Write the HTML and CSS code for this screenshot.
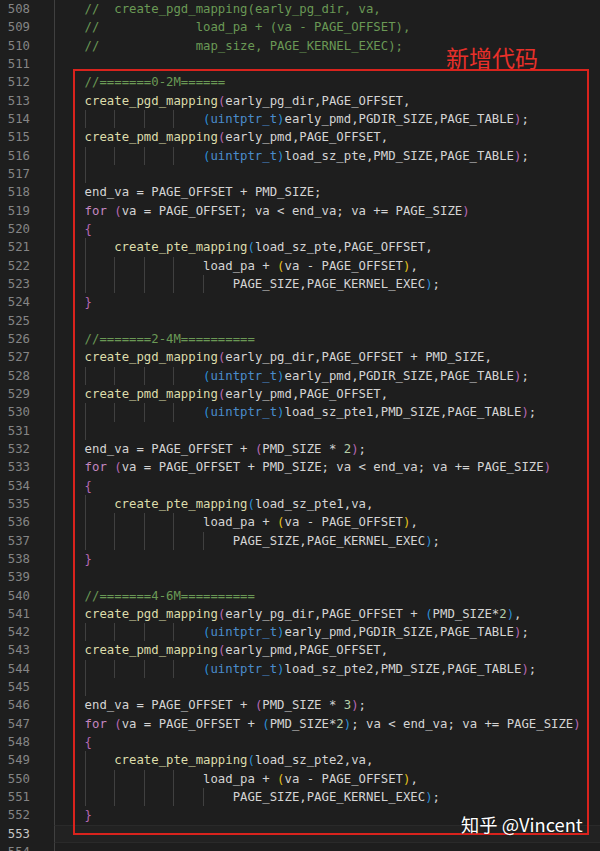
FILE: index.html
```html
<!DOCTYPE html>
<html lang="zh">
<head>
<meta charset="utf-8">
<link rel="stylesheet" href="styles.css">
<title>editor</title>
</head>
<body>
<div class="editor">
  <div class="ln"><span class="num">508</span><span class="code"><i class="sp"></i><span class="c">//  create_pgd_mapping(early_pg_dir, va,</span></span></div>
  <div class="ln"><span class="num">509</span><span class="code"><i class="sp"></i><span class="c">//             load_pa + (va - PAGE_OFFSET),</span></span></div>
  <div class="ln"><span class="num">510</span><span class="code"><i class="sp"></i><span class="c">//             map_size, PAGE_KERNEL_EXEC);</span></span></div>
  <div class="ln"><span class="num">511</span><span class="code"></span></div>
  <div class="ln"><span class="num">512</span><span class="code"><i class="sp"></i><span class="c">//=======0-2M======</span></span></div>
  <div class="ln"><span class="num">513</span><span class="code"><i class="sp"></i><span class="f">create_pgd_mapping</span><span class="b2">(</span>early_pg_dir,PAGE_OFFSET,</span></div>
  <div class="ln"><span class="num">514</span><span class="code"><i class="sp"></i><i class="g"></i><i class="g"></i><i class="g"></i><i class="g"></i><span class="b3">(</span><span class="t">uintptr_t</span><span class="b3">)</span>early_pmd,PGDIR_SIZE,PAGE_TABLE<span class="b2">)</span>;</span></div>
  <div class="ln"><span class="num">515</span><span class="code"><i class="sp"></i><span class="f">create_pmd_mapping</span><span class="b2">(</span>early_pmd,PAGE_OFFSET,</span></div>
  <div class="ln"><span class="num">516</span><span class="code"><i class="sp"></i><i class="g"></i><i class="g"></i><i class="g"></i><i class="g"></i><span class="b3">(</span><span class="t">uintptr_t</span><span class="b3">)</span>load_sz_pte,PMD_SIZE,PAGE_TABLE<span class="b2">)</span>;</span></div>
  <div class="ln"><span class="num">517</span><span class="code"><i class="sp"></i><i class="g"></i></span></div>
  <div class="ln"><span class="num">518</span><span class="code"><i class="sp"></i>end_va = PAGE_OFFSET + PMD_SIZE;</span></div>
  <div class="ln"><span class="num">519</span><span class="code"><i class="sp"></i><span class="k">for</span> <span class="b2">(</span>va = PAGE_OFFSET; va &lt; end_va; va += PAGE_SIZE<span class="b2">)</span></span></div>
  <div class="ln"><span class="num">520</span><span class="code"><i class="sp"></i><span class="b2">{</span></span></div>
  <div class="ln"><span class="num">521</span><span class="code"><i class="sp"></i><i class="g"></i><span class="f">create_pte_mapping</span><span class="b3">(</span>load_sz_pte,PAGE_OFFSET,</span></div>
  <div class="ln"><span class="num">522</span><span class="code"><i class="sp"></i><i class="g"></i><i class="g"></i><i class="g"></i><i class="g"></i>load_pa + <span class="b1">(</span>va - PAGE_OFFSET<span class="b1">)</span>,</span></div>
  <div class="ln"><span class="num">523</span><span class="code"><i class="sp"></i><i class="g"></i><i class="g"></i><i class="g"></i><i class="g"></i><i class="g"></i>PAGE_SIZE,PAGE_KERNEL_EXEC<span class="b3">)</span>;</span></div>
  <div class="ln"><span class="num">524</span><span class="code"><i class="sp"></i><span class="b2">}</span></span></div>
  <div class="ln"><span class="num">525</span><span class="code"></span></div>
  <div class="ln"><span class="num">526</span><span class="code"><i class="sp"></i><span class="c">//=======2-4M==========</span></span></div>
  <div class="ln"><span class="num">527</span><span class="code"><i class="sp"></i><span class="f">create_pgd_mapping</span><span class="b2">(</span>early_pg_dir,PAGE_OFFSET + PMD_SIZE,</span></div>
  <div class="ln"><span class="num">528</span><span class="code"><i class="sp"></i><i class="g"></i><i class="g"></i><i class="g"></i><i class="g"></i><span class="b3">(</span><span class="t">uintptr_t</span><span class="b3">)</span>early_pmd,PGDIR_SIZE,PAGE_TABLE<span class="b2">)</span>;</span></div>
  <div class="ln"><span class="num">529</span><span class="code"><i class="sp"></i><span class="f">create_pmd_mapping</span><span class="b2">(</span>early_pmd,PAGE_OFFSET,</span></div>
  <div class="ln"><span class="num">530</span><span class="code"><i class="sp"></i><i class="g"></i><i class="g"></i><i class="g"></i><i class="g"></i><span class="b3">(</span><span class="t">uintptr_t</span><span class="b3">)</span>load_sz_pte1,PMD_SIZE,PAGE_TABLE<span class="b2">)</span>;</span></div>
  <div class="ln"><span class="num">531</span><span class="code"><i class="sp"></i><i class="g"></i></span></div>
  <div class="ln"><span class="num">532</span><span class="code"><i class="sp"></i>end_va = PAGE_OFFSET + <span class="b2">(</span>PMD_SIZE * <span class="n">2</span><span class="b2">)</span>;</span></div>
  <div class="ln"><span class="num">533</span><span class="code"><i class="sp"></i><span class="k">for</span> <span class="b2">(</span>va = PAGE_OFFSET + PMD_SIZE; va &lt; end_va; va += PAGE_SIZE<span class="b2">)</span></span></div>
  <div class="ln"><span class="num">534</span><span class="code"><i class="sp"></i><span class="b2">{</span></span></div>
  <div class="ln"><span class="num">535</span><span class="code"><i class="sp"></i><i class="g"></i><span class="f">create_pte_mapping</span><span class="b3">(</span>load_sz_pte1,va,</span></div>
  <div class="ln"><span class="num">536</span><span class="code"><i class="sp"></i><i class="g"></i><i class="g"></i><i class="g"></i><i class="g"></i>load_pa + <span class="b1">(</span>va - PAGE_OFFSET<span class="b1">)</span>,</span></div>
  <div class="ln"><span class="num">537</span><span class="code"><i class="sp"></i><i class="g"></i><i class="g"></i><i class="g"></i><i class="g"></i><i class="g"></i>PAGE_SIZE,PAGE_KERNEL_EXEC<span class="b3">)</span>;</span></div>
  <div class="ln"><span class="num">538</span><span class="code"><i class="sp"></i><span class="b2">}</span></span></div>
  <div class="ln"><span class="num">539</span><span class="code"></span></div>
  <div class="ln"><span class="num">540</span><span class="code"><i class="sp"></i><span class="c">//=======4-6M==========</span></span></div>
  <div class="ln"><span class="num">541</span><span class="code"><i class="sp"></i><span class="f">create_pgd_mapping</span><span class="b2">(</span>early_pg_dir,PAGE_OFFSET + <span class="b3">(</span>PMD_SIZE*<span class="n">2</span><span class="b3">)</span>,</span></div>
  <div class="ln"><span class="num">542</span><span class="code"><i class="sp"></i><i class="g"></i><i class="g"></i><i class="g"></i><i class="g"></i><span class="b3">(</span><span class="t">uintptr_t</span><span class="b3">)</span>early_pmd,PGDIR_SIZE,PAGE_TABLE<span class="b2">)</span>;</span></div>
  <div class="ln"><span class="num">543</span><span class="code"><i class="sp"></i><span class="f">create_pmd_mapping</span><span class="b2">(</span>early_pmd,PAGE_OFFSET,</span></div>
  <div class="ln"><span class="num">544</span><span class="code"><i class="sp"></i><i class="g"></i><i class="g"></i><i class="g"></i><i class="g"></i><span class="b3">(</span><span class="t">uintptr_t</span><span class="b3">)</span>load_sz_pte2,PMD_SIZE,PAGE_TABLE<span class="b2">)</span>;</span></div>
  <div class="ln"><span class="num">545</span><span class="code"><i class="sp"></i><i class="g"></i></span></div>
  <div class="ln"><span class="num">546</span><span class="code"><i class="sp"></i>end_va = PAGE_OFFSET + <span class="b2">(</span>PMD_SIZE * <span class="n">3</span><span class="b2">)</span>;</span></div>
  <div class="ln"><span class="num">547</span><span class="code"><i class="sp"></i><span class="k">for</span> <span class="b2">(</span>va = PAGE_OFFSET + <span class="b3">(</span>PMD_SIZE*<span class="n">2</span><span class="b3">)</span>; va &lt; end_va; va += PAGE_SIZE<span class="b2">)</span></span></div>
  <div class="ln"><span class="num">548</span><span class="code"><i class="sp"></i><span class="b2">{</span></span></div>
  <div class="ln"><span class="num">549</span><span class="code"><i class="sp"></i><i class="g"></i><span class="f">create_pte_mapping</span><span class="b3">(</span>load_sz_pte2,va,</span></div>
  <div class="ln"><span class="num">550</span><span class="code"><i class="sp"></i><i class="g"></i><i class="g"></i><i class="g"></i><i class="g"></i>load_pa + <span class="b1">(</span>va - PAGE_OFFSET<span class="b1">)</span>,</span></div>
  <div class="ln"><span class="num">551</span><span class="code"><i class="sp"></i><i class="g"></i><i class="g"></i><i class="g"></i><i class="g"></i><i class="g"></i>PAGE_SIZE,PAGE_KERNEL_EXEC<span class="b3">)</span>;</span></div>
  <div class="ln"><span class="num">552</span><span class="code"><i class="sp"></i><span class="b2">}</span></span></div>
  <div class="ln cur"><span class="num">553</span><span class="code"></span></div>
  <div class="ln"><span class="num">554</span><span class="code"></span></div>

  <div class="mark-box"></div>
  <div class="mark-label">新增代码</div>
  <div class="watermark">知乎 @Vincent</div>
</div>
</body>
</html>
```

FILE: styles.css
```css
html, body {
  margin: 0;
  padding: 0;
  background: #1e1e1e;
  overflow: hidden;
}

.editor {
  position: relative;
  width: 600px;
  height: 851px;
  overflow: hidden;
  background: #1e1e1e;
  font-family: "DejaVu Sans Mono", "Liberation Mono", monospace;
  font-size: 12.3px;
  color: #d4d4d4;
}

.ln {
  display: flex;
  height: 18.333px;
  line-height: 18.333px;
  white-space: pre;
}

.num {
  width: 30px;
  flex: none;
  text-align: right;
  color: #858585;
  padding-right: 25px;
}

.code {
  flex: 1;
  display: block;
  border-left: 1px solid #404040;
  margin-left: -1px;
  white-space: pre;
}

.cur .num {
  color: #c6c6c6;
}

.cur .code {
  background: #222222;
  border-top: 1px solid #2a2a2a;
  border-bottom: 1px solid #2a2a2a;
  box-sizing: border-box;
}

.sp, .g {
  display: inline-block;
  width: 4ch;
  height: 18.333px;
  vertical-align: top;
  box-sizing: border-box;
}

.g {
  border-left: 1px solid #404040;
}

.c { color: #6a9955; }
.f { color: #dcdcaa; }
.k { color: #c586c0; }
.t { color: #4a8ccc; }
.n { color: #b5cea8; }
.b1 { color: #e6c41c; }
.b2 { color: #b868b4; }
.b3 { color: #2b8fd8; }

.mark-box {
  position: absolute;
  left: 73px;
  top: 69px;
  width: 516px;
  height: 766px;
  box-sizing: border-box;
  border: 2px solid #d9231d;
}

.mark-label {
  position: absolute;
  left: 446px;
  top: 45px;
  font-family: "Noto Sans CJK SC", sans-serif;
  font-size: 23px;
  line-height: 24px;
  color: #e8302a;
}

.watermark {
  position: absolute;
  left: 461px;
  top: 813px;
  font-family: "Noto Sans CJK SC", "Noto Sans", sans-serif;
  font-size: 18.3px;
  line-height: 22px;
  color: #ffffff;
  text-shadow: 0 0 2px rgba(0, 0, 0, 0.6);
}
```
